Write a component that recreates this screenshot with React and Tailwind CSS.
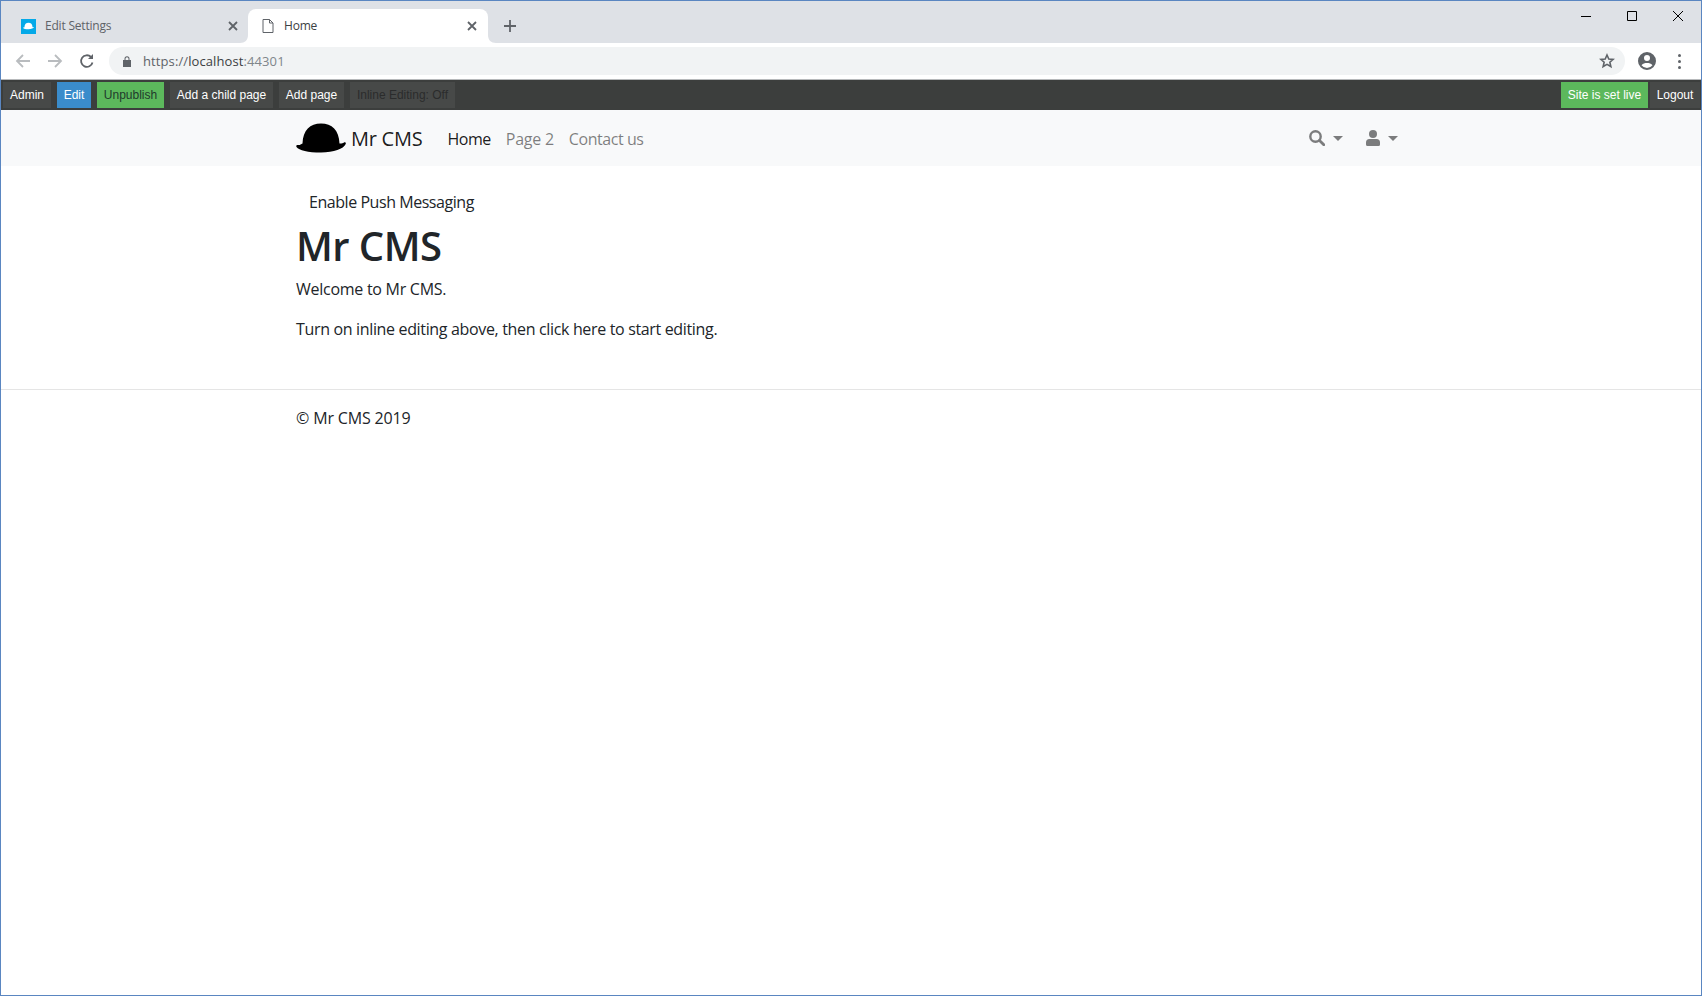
const HAT_PATH =
  'M6.500 20.500C7 7 14 .5 25 .5s18 6.500 18.500 20c2 .2 3.300-.4 4.500-1.100 1.300-.5 2.200 .5 1.700 1.700C47.500 26 38 29.500 25 29.500 12 29.500 3 27.500 .5 24c-.7-1.500 .3-2.400 1.800-2 1.500 .2 2.600 -.5 4.200-1.500z';

function HatIcon({ className, fill = '#000' }) {
  return (
    <svg viewBox="0 0 50 30" className={className} fill={fill}>
      <path d={HAT_PATH} />
    </svg>
  );
}

function CloseIcon() {
  return (
    <svg viewBox="0 0 10 10" className="h-[10px] w-[10px]" stroke="#5f6368" strokeWidth="1.800" fill="none">
      <path d="M1 1l8 8M9 1l-8 8" />
    </svg>
  );
}

function TabBar() {
  return (
    <div className="flex h-[42px] bg-[#dee1e6]">
      <div className="mt-[8px] flex h-[34px] w-[247px] items-center pl-[20px] pr-[10px] text-[#5f6368]">
        <span className="flex h-[15px] w-[15px] items-center justify-center bg-[#04a9e8]">
          <HatIcon className="h-[8px] w-[11px]" fill="#fff" />
        </span>
        <span className="ml-[9px] flex-1 font-['Open_Sans',sans-serif] text-xs tracking-[-0.2px]">Edit Settings</span>
        <CloseIcon />
      </div>
      <div className="relative mt-[8px] flex h-[34px] w-[240px] items-center rounded-t-lg bg-white pl-[14px] pr-[11px] text-[#3c4043]">
        <svg viewBox="0 0 8 8" className="absolute bottom-0 left-[-8px] h-[8px] w-[8px]" fill="#fff">
          <path d="M8 0v8H0c5 0 8-3 8-8z" />
        </svg>
        <svg viewBox="0 0 12 14" className="h-[14px] w-[12px]" fill="none" stroke="#5f6368" strokeWidth="1">
          <path d="M1 .5h6.500L11 4v9.500H1zM7.500 .5V4H11" />
        </svg>
        <span className="ml-[10px] flex-1 font-['Open_Sans',sans-serif] text-xs tracking-[-0.2px]">Home</span>
        <CloseIcon />
        <svg viewBox="0 0 8 8" className="absolute right-[-8px] bottom-0 h-[8px] w-[8px]" fill="#fff">
          <path d="M0 0v8h8C3 8 0 5 0 0z" />
        </svg>
      </div>
      <svg viewBox="0 0 12 12" className="mt-[19px] ml-[16px] h-[12px] w-[12px]" stroke="#5f6368" strokeWidth="1.800">
        <path d="M6 0v12M0 6h12" />
      </svg>
      {/* window controls */}
      <div className="ml-auto flex h-[30px] items-center gap-[36px] pr-[18px]">
        <svg viewBox="0 0 10 10" className="h-[10px] w-[10px]" stroke="#000" strokeWidth="1">
          <path d="M0 5.500h10" />
        </svg>
        <svg viewBox="0 0 10 10" className="h-[10px] w-[10px]" stroke="#000" strokeWidth="1" fill="none">
          <path d="M.5 .5h9v9h-9z" />
        </svg>
        <svg viewBox="0 0 10 10" className="h-[10px] w-[10px]" stroke="#000" strokeWidth="1" fill="none">
          <path d="M0 0l10 10M10 0L0 10" />
        </svg>
      </div>
    </div>
  );
}

function Toolbar() {
  return (
    <div className="flex h-[37px] items-center border-b border-[#b7b9bb] bg-white pl-[14px] pr-[20px]">
      <svg viewBox="0 0 16 16" className="h-[16px] w-[16px]" fill="none" stroke="#b9bcbf" strokeWidth="1.800">
        <path d="M15 8H2M8 2L2 8l6 6" />
      </svg>
      <svg viewBox="0 0 16 16" className="ml-[16px] h-[16px] w-[16px]" fill="none" stroke="#b9bcbf" strokeWidth="1.800">
        <path d="M1 8h13M8 2l6 6-6 6" />
      </svg>
      <svg viewBox="0 0 16 16" className="ml-[16px] h-[16px] w-[16px]" fill="none" stroke="#5f6368" strokeWidth="1.800">
        <path d="M13.500 9.500A5.800 5.800 0 1 1 12 4" />
        <path d="M14 1v5H9z" fill="#5f6368" stroke="none" />
      </svg>
      <div className="ml-[14px] flex h-[28px] flex-1 items-center rounded-full bg-[#f1f3f4] pl-[14px] pr-[10px]">
        <svg viewBox="0 0 8 11" className="h-[11px] w-[8px]" fill="#5f6368">
          <path d="M1.500 4V2.800a2.500 2.500 0 0 1 5 0V4H8v7H0V4zm1 0h3V2.800a1.500 1.500 0 0 0-3 0z" />
        </svg>
        <span className="ml-[12px] mt-[1px] flex-1 font-['Open_Sans',sans-serif] text-[13px] tracking-[0.1px] text-[#3c4043]">
          <span className="text-[#5f6368]">https://</span>localhost<span className="text-[#80868b]">:44301</span>
        </span>
        <svg viewBox="0 0 24 24" className="h-[16px] w-[16px]" fill="none" stroke="#5f6368" strokeWidth="2.400">
          <path d="M12 3l2.700 6 6.500 .6-4.900 4.300 1.500 6.400L12 17l-5.800 3.300 1.500-6.400L2.800 9.600 9.300 9z" />
        </svg>
      </div>
      <svg viewBox="0 0 18 18" className="ml-[13px] h-[18px] w-[18px]" fill="#5f6368">
        <path d="M9 0a9 9 0 1 0 0 18A9 9 0 0 0 9 0zm0 3a3 3 0 1 1 0 6 3 3 0 0 1 0-6zm0 13a7 7 0 0 1-5.500-2.700C4.500 11.500 7 11 9 11s4.500 .5 5.500 2.300A7 7 0 0 1 9 16z" />
      </svg>
      <div className="ml-[22px] flex flex-col gap-[3px]">
        <span className="h-[3px] w-[3px] rounded-full bg-[#5f6368]" />
        <span className="h-[3px] w-[3px] rounded-full bg-[#5f6368]" />
        <span className="h-[3px] w-[3px] rounded-full bg-[#5f6368]" />
      </div>
    </div>
  );
}

function AdminButton({ children, className = 'bg-[#474948] text-white', width }) {
  return (
    <div className={`flex h-[26px] items-center justify-center text-xs ${width} ${className}`}>{children}</div>
  );
}

function AdminBar() {
  return (
    <div className="flex h-[30px] items-center gap-[6px] bg-[#3c3e3d] pl-[2px] pr-[1px] font-['Liberation_Sans',Arial,sans-serif]">
      <AdminButton width="w-[48px]">Admin</AdminButton>
      <AdminButton width="w-[34px]" className="bg-[#3a8ccb] text-white">Edit</AdminButton>
      <AdminButton width="w-[67px]" className="bg-[#5cb85c] text-[#1f3a2c]">Unpublish</AdminButton>
      <AdminButton width="w-[103px]">Add a child page</AdminButton>
      <AdminButton width="w-[65px]">Add page</AdminButton>
      <AdminButton width="w-[105px]" className="bg-[#474948] text-[#2b2c2c]">Inline Editing: Off</AdminButton>
      <AdminButton width="w-[87px] ml-auto" className="bg-[#5cb85c] text-white">Site is set live</AdminButton>
      <AdminButton width="w-[50px] -ml-[4px]">Logout</AdminButton>
    </div>
  );
}

function Caret() {
  return <span className="ml-[8px] h-0 w-0 border-x-[5px] border-t-[5px] border-x-transparent border-t-[#7b7c7d]" />;
}

function Navbar() {
  return (
    <div className="flex h-[56px] justify-center bg-[#f8f9fa]">
      <div className="flex w-[1110px] items-center pr-[8px]">
        <HatIcon className="h-[30px] w-[50px]" />
        <span className="ml-[5px] mt-[2px] text-[20px] tracking-[-0.25px] text-black/90">Mr CMS</span>
        <nav className="ml-[25px] mt-[2px] flex gap-[15px] text-base tracking-[-0.45px]">
          <span className="text-black/90">Home</span>
          <span className="tracking-[-0.25px] text-black/50">Page 2</span>
          <span className="text-black/50">Contact us</span>
        </nav>
        <div className="ml-auto flex items-center">
          <svg viewBox="0 0 16 16" className="h-[16px] w-[16px]" fill="none" stroke="#7b7c7d">
            <circle cx="6.500" cy="6.500" r="5.200" strokeWidth="2.400" />
            <path d="M10.500 10.500l4.300 4.300" strokeWidth="2.800" strokeLinecap="round" />
          </svg>
          <Caret />
          <svg viewBox="0 0 14 16" className="ml-[23px] h-[16px] w-[14px]" fill="#7b7c7d">
            <circle cx="7" cy="4" r="4" />
            <path d="M3.500 9h7A3.500 3.500 0 0 1 14 12.500v2A1.500 1.500 0 0 1 12.500 16h-11A1.500 1.500 0 0 1 0 14.500v-2A3.500 3.500 0 0 1 3.500 9z" />
          </svg>
          <Caret />
        </div>
      </div>
    </div>
  );
}

export default function App() {
  return (
    <div className="flex min-h-[996px] flex-col border border-[#5a86c1] bg-white font-['Open_Sans',sans-serif] text-[#212529]">
      <TabBar />
      <Toolbar />
      <AdminBar />
      <Navbar />

      <main className="mx-auto w-[1110px] text-base">
        <p className="ml-[13px] mt-[24px] h-[24px] leading-6 tracking-[-0.45px]">Enable Push Messaging</p>
        <h1 className="mt-[8px] text-[40px] font-semibold leading-[48px] tracking-[-0.55px]">Mr CMS</h1>
        <p className="mt-[7px] leading-6 tracking-[-0.27px]">Welcome to Mr CMS.</p>
        <p className="mt-[16px] leading-6 tracking-[-0.34px]">Turn on inline editing above, then click here to start editing.</p>
      </main>

      <footer className="mt-[48px] border-t border-[#e5e5e5]">
        <p className="mx-auto mt-[16px] w-[1110px] text-base leading-6 tracking-[-0.16px]">© Mr CMS 2019</p>
      </footer>
    </div>
  );
}
